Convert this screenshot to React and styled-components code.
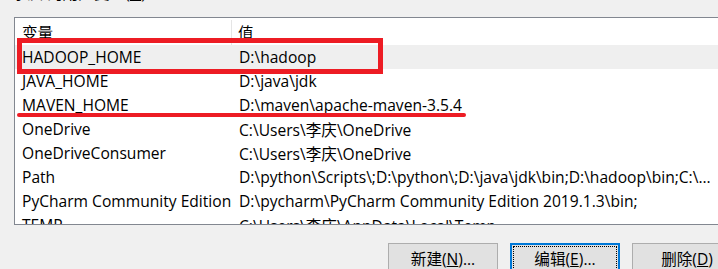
import React from "react";
import styled, { createGlobalStyle } from "styled-components";

const GlobalStyle = createGlobalStyle`
  html, body {
    margin: 0;
    padding: 0;
    background: #f0f0f0;
    overflow: hidden;
  }
  body {
    font-family: "Open Sans", "Noto Sans CJK SC", sans-serif;
    font-size: 15.6px;
    color: #000;
  }
`;

export default function App() {
  const data = [
    { name: "HADOOP_HOME", value: "D:\\hadoop", selected: true },
    { name: "JAVA_HOME", value: "D:\\java\\jdk" },
    { name: "MAVEN_HOME", value: "D:\\maven\\apache-maven-3.5.4" },
    { name: "OneDrive", value: "C:\\Users\\李庆\\OneDrive" },
    { name: "OneDriveConsumer", value: "C:\\Users\\李庆\\OneDrive" },
    {
      name: "Path",
      value:
        "D:\\python\\Scripts\\;D:\\python\\;D:\\java\\jdk\\bin;D:\\hadoop\\bin;C:\\...",
    },
    {
      name: "PyCharm Community Edition",
      value: "D:\\pycharm\\PyCharm Community Edition 2019.1.3\\bin;",
    },
    { name: "TEMP", value: "C:\\Users\\李庆\\AppData\\Local\\Temp" },
  ];

  return (
    <Page>
      <GlobalStyle />
      <GroupLabel>
        李庆 的用户变量(<u>U</u>)
      </GroupLabel>
      <ListWrap>
        <ListBox>
          <HeaderRow>
            <HeaderCell divider>变量</HeaderCell>
            <HeaderCell>值</HeaderCell>
          </HeaderRow>
          {data.map((row) => (
            <Row key={row.name} selected={row.selected}>
              <NameCell>{row.name}</NameCell>
              <ValueCell>{row.value}</ValueCell>
            </Row>
          ))}
        </ListBox>
        <RedBox />
        <RedLine />
      </ListWrap>
      <Buttons>
        <Button>
          新建(<u>N</u>)...
        </Button>
        <Button focused>
          编辑(<u>E</u>)...
        </Button>
        <Button>
          删除(<u>D</u>)
        </Button>
      </Buttons>
    </Page>
  );
}

const Page = styled.div`
  width: 718px;
  height: 269px;
  overflow: hidden;
  display: flex;
  flex-direction: column;
`;

const GroupLabel = styled.div`
  margin: -17px 0 0 12px;
  height: 20px;
  line-height: 20px;
  white-space: nowrap;
  u {
    text-decoration: underline;
  }
`;

const ListWrap = styled.div`
  position: relative;
  margin: 14px 0 0 14px;
  width: 760px;
`;

const ListBox = styled.div`
  height: 206px;
  border: 1px solid #828790;
  background: #fff;
  overflow: hidden;
`;

const HeaderRow = styled.div`
  display: grid;
  grid-template-columns: 217px 1fr;
  height: 27px;
  align-items: stretch;
`;

const HeaderCell = styled.div`
  display: flex;
  align-items: center;
  padding-left: ${(p) => (p.divider ? "7px" : "6px")};
  margin: 2px 0 0;
  border-right: ${(p) => (p.divider ? "1px solid #e5e5e5" : "none")};
  white-space: nowrap;
`;

const Row = styled.div`
  display: grid;
  grid-template-columns: 217px 1fr;
  height: 24px;
  align-items: center;
  background: ${(p) => (p.selected ? "#efefef" : "transparent")};
  white-space: nowrap;
`;

const NameCell = styled.div`
  padding-left: 7px;
  overflow: hidden;
`;

const ValueCell = styled.div`
  padding-left: 7px;
  overflow: hidden;
`;

const RedBox = styled.div`
  position: absolute;
  left: 3px;
  top: 21px;
  width: 366px;
  height: 36px;
  border: 5px solid #ed1c24;
  box-sizing: border-box;
`;

const RedLine = styled.div`
  position: absolute;
  left: 3px;
  top: 96px;
  width: 449px;
  height: 4px;
  border-radius: 2px;
  background: #ed1c24;
`;

const Buttons = styled.div`
  display: flex;
  gap: 12px;
  margin: 18px 0 0 388px;
`;

const Button = styled.button`
  flex: 0 0 110px;
  height: 34px;
  box-sizing: border-box;
  padding: 0 0 3px;
  font: inherit;
  color: #000;
  background: #e1e1e1;
  border: ${(p) => (p.focused ? "2px solid #0078d7" : "1px solid #adadad")};
  outline: ${(p) => (p.focused ? "1px dotted #000" : "none")};
  outline-offset: ${(p) => (p.focused ? "-4px" : "0")};
  white-space: nowrap;
  u {
    text-decoration: underline;
  }
`;
